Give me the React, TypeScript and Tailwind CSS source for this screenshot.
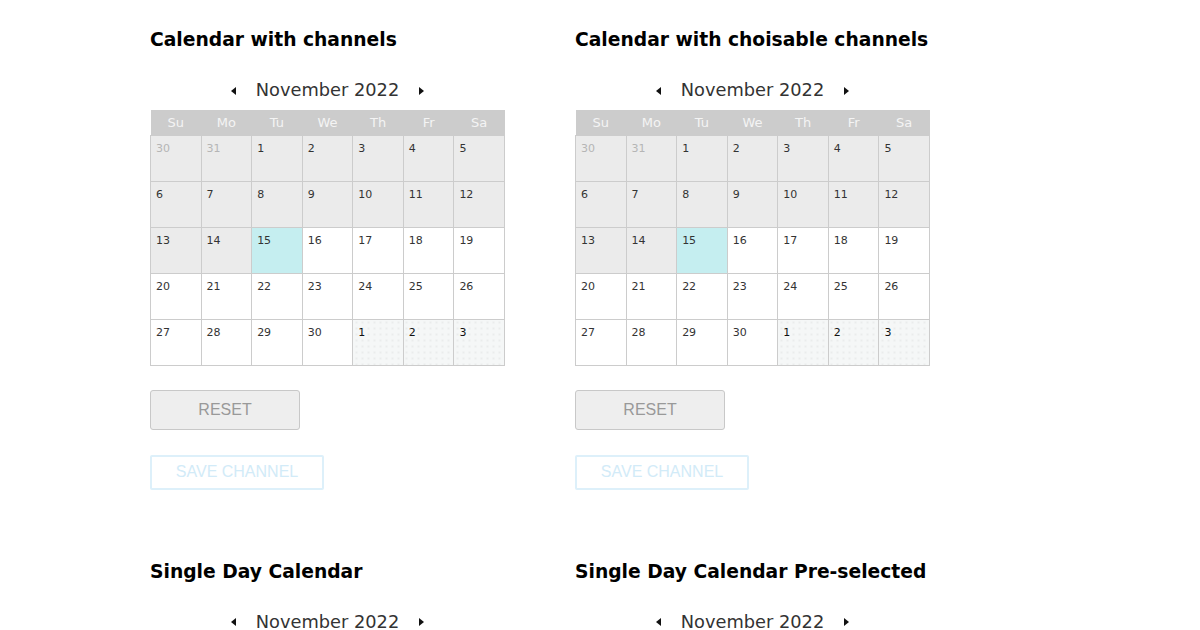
import React from 'react'

const DAYS = ['Su', 'Mo', 'Tu', 'We', 'Th', 'Fr', 'Sa']

type Cell = { n: number; kind: 'prev' | 'past' | 'today' | 'future' | 'next' }

function buildMonth(): Cell[][] {
  const cells: Cell[] = [
    { n: 30, kind: 'prev' },
    { n: 31, kind: 'prev' },
  ]
  for (let d = 1; d <= 30; d++) {
    cells.push({ n: d, kind: d < 15 ? 'past' : d === 15 ? 'today' : 'future' })
  }
  cells.push({ n: 1, kind: 'next' }, { n: 2, kind: 'next' }, { n: 3, kind: 'next' })
  const weeks: Cell[][] = []
  for (let i = 0; i < cells.length; i += 7) weeks.push(cells.slice(i, i + 7))
  return weeks
}

const cellStyles: Record<Cell['kind'], string> = {
  prev: 'bg-[#ebebeb] text-[#b5b5b5]',
  past: 'bg-[#ebebeb] text-[#333]',
  today: 'bg-[#c5eef0] text-[#333]',
  future: 'bg-white text-[#333]',
  next: 'bg-[#f5f7f7] bg-[radial-gradient(#eaecec_1px,transparent_1px)] bg-[length:6px_6px] text-[#111]',
}

function MonthNav() {
  return (
    <div className="flex h-6 w-[355px] items-center justify-center gap-5 text-[17.8px] leading-6 text-[#333]">
      <svg width="5" height="8" viewBox="0 0 5 8" className="mt-px">
        <polygon points="5,0 5,8 0,4" fill="#111" />
      </svg>
      <span>November 2022</span>
      <svg width="5" height="8" viewBox="0 0 5 8" className="mt-px">
        <polygon points="0,0 0,8 5,4" fill="#111" />
      </svg>
    </div>
  )
}

function Calendar() {
  const weeks = buildMonth()
  return (
    <table className="w-[355px] table-fixed border-collapse">
      <thead>
        <tr className="h-[25px] bg-[#cccccc]">
          {DAYS.map((d) => (
            <th key={d} className="p-0 text-center text-[13px] font-normal text-[#f4f4f4]">
              {d}
            </th>
          ))}
        </tr>
      </thead>
      <tbody>
        {weeks.map((week, i) => (
          <tr key={i} className="h-[46px]">
            {week.map((c, j) => (
              <td
                key={j}
                className={`border border-[#cccccc] px-[5px] pt-[6px] align-top text-[11px] leading-[13px] ${cellStyles[c.kind]}`}
              >
                {c.n}
              </td>
            ))}
          </tr>
        ))}
      </tbody>
    </table>
  )
}

function Section({ title, full }: { title: string; full?: boolean }) {
  return (
    <div className="flex flex-col">
      <h2 className="h-6 whitespace-nowrap text-[18.72px] font-bold leading-6 text-black">{title}</h2>
      <div className="mt-[26px]">
        <MonthNav />
      </div>
      <div className="mt-[8px]">
        <Calendar />
      </div>
      {full && (
        <div className="flex flex-col items-start">
          <button className="mt-[24px] h-10 w-[150px] rounded-[3px] border border-[#c8c8c8] bg-[#eeeeee] font-['Liberation_Sans',Arial,sans-serif] text-[16px] text-[#999]">
            RESET
          </button>
          <button className="mt-[25px] h-[35px] w-[174px] rounded-[2px] border-2 border-[#ddf0fa] bg-white font-['Liberation_Sans',Arial,sans-serif] text-[16px] text-[#d2ebf8]">
            SAVE CHANNEL
          </button>
        </div>
      )}
    </div>
  )
}

export default function App() {
  return (
    <div className="min-h-screen bg-white font-['DejaVu_Sans',Verdana,sans-serif]">
      <div className="grid grid-cols-[355px_355px] gap-x-[70px] gap-y-[70px] pl-[150px] pt-[28px]">
        <Section title="Calendar with channels" full />
        <Section title="Calendar with choisable channels" full />
        <Section title="Single Day Calendar" />
        <Section title="Single Day Calendar Pre-selected" />
      </div>
    </div>
  )
}
